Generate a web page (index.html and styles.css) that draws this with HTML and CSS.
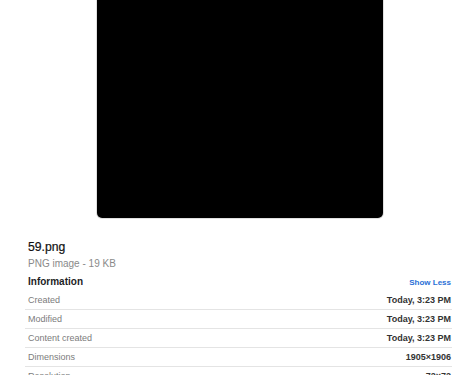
FILE: index.html
```html
<!DOCTYPE html>
<html>
<head>
<meta charset="utf-8">
<link rel="stylesheet" href="styles.css">
</head>
<body>
<div class="panel">
  <div class="preview"><div class="image"></div></div>
  <div class="title">59.png</div>
  <div class="subtitle">PNG image - 19 KB</div>
  <div class="section-head">
    <span class="section-title">Information</span>
    <span class="toggle">Show Less</span>
  </div>
  <div class="rows">
    <div class="row"><span class="label">Created</span><span class="value">Today, 3:23 PM</span></div>
    <div class="row"><span class="label">Modified</span><span class="value">Today, 3:23 PM</span></div>
    <div class="row"><span class="label">Content created</span><span class="value">Today, 3:23 PM</span></div>
    <div class="row"><span class="label">Dimensions</span><span class="value">1905×1906</span></div>
    <div class="row"><span class="label">Resolution</span><span class="value">72×72</span></div>
  </div>
</div>
</body>
</html>
```
FILE: styles.css
```css
html, body {
  margin: 0;
  padding: 0;
  background: #ffffff;
  overflow: hidden;
}
body {
  font-family: "Liberation Sans", Arial, sans-serif;
  color: #1f1f1f;
  width: 474px;
  height: 375px;
}
.panel {
  padding: 0 23px 0 28px;
}
.preview {
  display: flex;
  justify-content: center;
  margin-top: -68px;
}
.image {
  width: 286px;
  height: 286px;
  background: #000;
  border-radius: 5px;
  box-shadow: 0 0 0 1px rgba(0,0,0,0.12);
}
.title {
  margin-top: 21px;
  font-size: 12.2px;
  line-height: 16px;
  color: #111;
  -webkit-text-stroke: 0.2px #111;
}
.subtitle {
  margin-top: 2px;
  font-size: 10px;
  line-height: 14px;
  color: #8a8a8a;
}
.section-head {
  display: flex;
  justify-content: space-between;
  align-items: baseline;
  margin-top: 4px;
  line-height: 14px;
}
.section-title {
  font-size: 10px;
  font-weight: 700;
  color: #1d1d1f;
}
.toggle {
  font-size: 8px;
  font-weight: 700;
  color: #2a6fd6;
}
.rows {
  margin: 1px -1px 0 -3px;
}
.row {
  display: flex;
  justify-content: space-between;
  align-items: center;
  height: 18px;
  padding: 0 1px 0 3px;
  border-bottom: 1px solid #e4e4e4;
  font-size: 9px;
}
.label {
  color: #7c7c7c;
}
.value {
  font-size: 9px;
  color: #333;
  font-weight: 700;
}
```
